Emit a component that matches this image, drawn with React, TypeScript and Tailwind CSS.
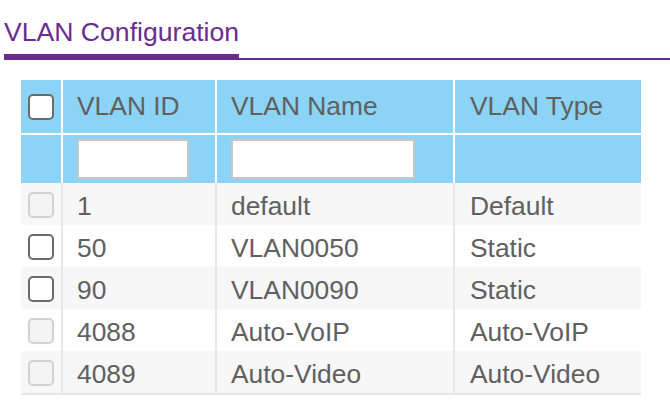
import React from "react";

const font = { fontFamily: '"Liberation Sans", Arial, sans-serif' };

function Box({ disabled }: { disabled?: boolean }) {
  return disabled ? (
    <span className="block w-[26px] h-[26px] rounded-[5px] border-2 border-[#d2d2d2] bg-[#f4f4f4]" />
  ) : (
    <span className="block w-[26px] h-[26px] rounded-[5px] border-2 border-[#6b6b6b] bg-white" />
  );
}

const rows = [
  { id: "1", name: "default", type: "Default", disabled: true },
  { id: "50", name: "VLAN0050", type: "Static", disabled: false },
  { id: "90", name: "VLAN0090", type: "Static", disabled: false },
  { id: "4088", name: "Auto-VoIP", type: "Auto-VoIP", disabled: true },
  { id: "4089", name: "Auto-Video", type: "Auto-Video", disabled: true },
];

export default function App() {
  return (
    <div className="w-[670px] h-[420px] bg-white pt-[16px]" style={font}>
      <div className="ml-[4px] flex border-b-2 border-[#6a2c8f]">
        <span className="text-[26.6px] leading-[32px] pb-[6px] -mb-[2px] border-b-[6px] border-[#6a2c8f] text-[#6a2c8f]">
          VLAN Configuration
        </span>
      </div>

      <div className="mt-[20px] ml-[21px] w-[620px] text-[26.4px] text-[#606060]">
        <div className="grid grid-cols-[42px_154px_238px_186px] h-[55px] bg-[#8bd4f5] border-b-2 border-white">
          <div className="flex items-center justify-center border-r-2 border-white">
            <Box />
          </div>
          <div className="flex items-center pl-[14px] border-r-2 border-white">VLAN ID</div>
          <div className="flex items-center pl-[14px] border-r-2 border-white">VLAN Name</div>
          <div className="flex items-center pl-[15px]">VLAN Type</div>
        </div>
        <div className="grid grid-cols-[42px_154px_238px_186px] h-[48px] bg-[#8bd4f5]">
          <div className="border-r-2 border-white" />
          <div className="flex items-center pl-[14px] border-r-2 border-white">
            <input className="w-[112px] h-[40px] bg-white border-2 border-[#c6c6c6] outline-none" />
          </div>
          <div className="flex items-center pl-[14px] border-r-2 border-white">
            <input className="w-[184px] h-[40px] bg-white border-2 border-[#c6c6c6] outline-none" />
          </div>
          <div />
        </div>
        {rows.map((r, i) => (
          <div
            key={r.id}
            className={
              "grid grid-cols-[42px_154px_238px_186px] h-[42px] " +
              (i % 2 === 0 ? "bg-[#f7f7f7]" : "bg-white")
            }
          >
            <div className="flex items-center justify-center border-r-2 border-[#e6e6e6]">
              <Box disabled={r.disabled} />
            </div>
            <div className="flex items-center pl-[14px] pt-[4px] border-r-2 border-[#e6e6e6]">{r.id}</div>
            <div className="flex items-center pl-[14px] pt-[4px] border-r-2 border-[#e6e6e6]">{r.name}</div>
            <div className="flex items-center pl-[15px] pt-[4px]">{r.type}</div>
          </div>
        ))}
        <div className="h-[2px] bg-[#e6e6e6]" />
      </div>
    </div>
  );
}
